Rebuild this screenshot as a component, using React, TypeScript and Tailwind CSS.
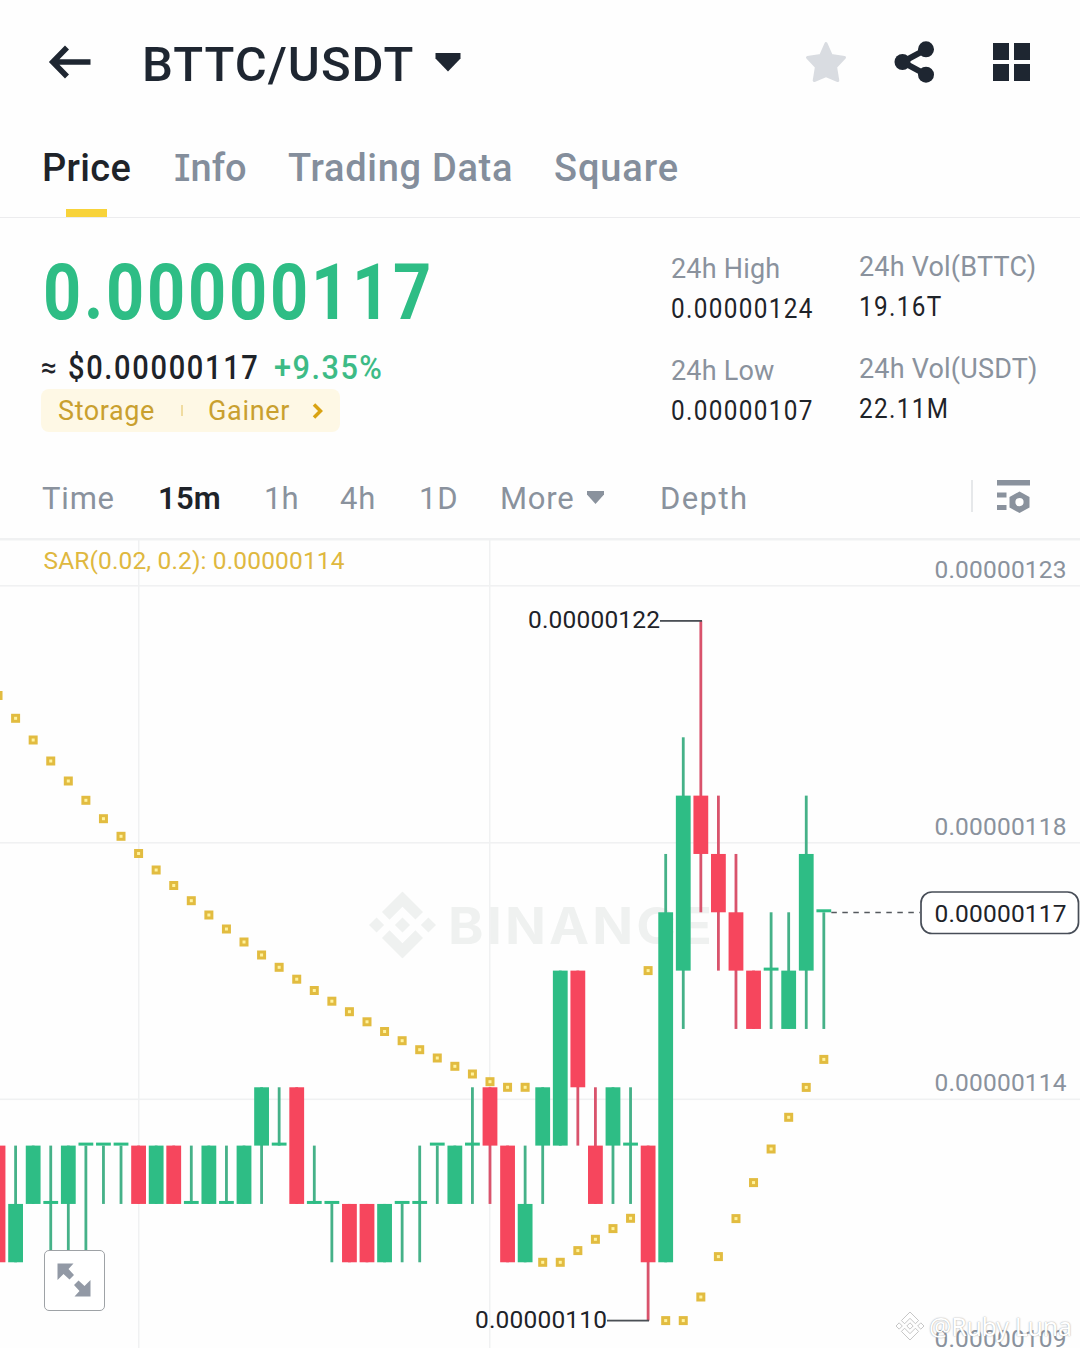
import { SiBinance } from 'react-icons/si';

type Candle = {
  up: boolean;
  top: number;
  bottom: number;
  high: number;
  low: number;
};

// Prices are in units of 0.00000001
const candle = (up: boolean, top: number, bottom: number, high = top, low = bottom): Candle => ({
  up,
  top,
  bottom,
  high,
  low,
});
const green = (top: number, bottom: number, high?: number, low?: number) => candle(true, top, bottom, high, low);
const red = (top: number, bottom: number, high?: number, low?: number) => candle(false, top, bottom, high, low);
const doji = (price: number, high?: number, low?: number) => candle(true, price, price, high, low);

const candles: Candle[] = [
  red(113, 111),
  green(112, 111, 113),
  green(113, 112),
  doji(112, 113, 111),
  green(113, 112, 113, 111),
  doji(113, 113, 111),
  doji(113, 113, 112),
  doji(113, 113, 112),
  red(113, 112),
  green(113, 112),
  red(113, 112),
  doji(112, 113),
  green(113, 112),
  doji(112, 113),
  green(113, 112),
  green(114, 113, 114, 112),
  doji(113, 114),
  red(114, 112),
  doji(112, 113),
  doji(112, 112, 111),
  red(112, 111),
  red(112, 111),
  green(112, 111),
  doji(112, 112, 111),
  doji(112, 113, 111),
  doji(113, 113, 112),
  green(113, 112),
  doji(113, 114, 112),
  red(114, 113, 114, 112),
  red(113, 111),
  green(112, 111, 113),
  green(114, 113, 114, 112),
  green(116, 113),
  red(116, 114, 116, 113),
  red(113, 112, 114),
  green(114, 113, 114, 112),
  doji(113, 114, 112),
  red(113, 111, 113, 110),
  green(117, 111, 118),
  green(119, 116, 120, 115),
  red(119, 118, 122, 117),
  red(118, 117, 119, 116),
  red(117, 116, 118, 115),
  red(116, 115),
  doji(116, 117, 115),
  green(116, 115, 117),
  green(118, 116, 119, 115),
  doji(117, 117, 115),
];

// Parabolic SAR, one point per candle, in chart pixels
const sar = [
  157.5, 180.3, 202, 223, 243, 262.3, 280.7, 298.3, 315.5, 332, 347.5, 362.7, 377, 391, 404, 417, 429.3, 441.2, 452.5,
  463.2, 473.7, 483.8, 493.5, 502.7, 511.7, 520, 528.3, 536, 543.7, 549.3, 549.3, 724.3, 724.3, 712.6, 701.3, 690.6,
  680.3, 432.6, 782.6, 782.6, 759, 718.6, 680.6, 644.6, 611, 579.3, 549.4, 521.4,
];

const axis = [
  { label: '0.00000123', y: 39.5 },
  { label: '0.00000118', y: 296.5 },
  { label: '0.00000114', y: 552.5 },
  { label: '0.00000109', y: 809 },
];

const xOf = (i: number) => 15.6 + (i - 1) * 17.57;
const yOf = (price: number) => 782.6 - (price - 110) * 58.33;

function Header() {
  return (
    <header className="flex h-[124px] items-center pl-[48px] pr-[48px] text-[#1e2631]">
      <svg className="h-9 w-11" viewBox="0 0 44 36" fill="none" stroke="currentColor" strokeWidth="5.6">
        <path d="M42.5 18H5M19 3.5 4.8 18 19 32.5" />
      </svg>
      <h1 className="ml-[50px] w-[293px] whitespace-nowrap pt-[5px] text-[49px] font-medium leading-[60px] tracking-[1px]">
        BTTC/USDT
      </h1>
      <svg className="h-5 w-[26px]" viewBox="0 0 26 20" fill="currentColor">
        <path d="M0.5 1h25v5.5L13 19.5 0.5 6.5z" />
      </svg>
      <svg
        className="ml-auto h-[42px] w-[42px] text-[#d9dce1]"
        viewBox="0 0 42 42"
        fill="currentColor"
        stroke="currentColor"
        strokeWidth="3"
        strokeLinejoin="round"
      >
        <path d="M21 2.5 26.3 14.5 39.5 16.5 30.6 26 32.8 39.5 21 34.5 9.2 39.5 11.4 26 2.5 16.5 15.7 14.5z" />
      </svg>
      <svg className="ml-[47px] h-[42px] w-10" viewBox="0 0 40 42" fill="currentColor">
        <path d="M32 8.3 8.5 21 32 33.7" fill="none" stroke="currentColor" strokeWidth="6" />
        <circle cx="8.5" cy="21" r="8" />
        <circle cx="32" cy="8.3" r="8" />
        <circle cx="32" cy="33.7" r="8" />
      </svg>
      <div className="ml-[59px] mr-[2px] grid grid-cols-2 gap-[4.5px]">
        <span className="size-[16.4px] bg-current" />
        <span className="size-[16.4px] bg-current" />
        <span className="size-[16.4px] bg-current" />
        <span className="size-[16.4px] bg-current" />
      </div>
    </header>
  );
}

function Tabs() {
  return (
    <nav className="flex h-[94px] border-b border-[#ececee] pl-[42px] pt-6 text-[38px] font-medium leading-10 text-[#848e9c]">
      <div className="flex w-[89px] flex-col justify-between text-[#1e2329]">
        <span className="whitespace-nowrap tracking-[0.3px]">Price</span>
        <span className="h-2 w-[41px] self-center bg-[#f8d33a]" />
      </div>
      <span className="ml-[43px] w-[114px] whitespace-nowrap">
        <span className="font-['Inter'] text-[36.5px] [font-feature-settings:'cv08']">I</span>nfo
      </span>
      <span className="w-[266px] whitespace-nowrap tracking-[0.7px]">Trading Data</span>
      <span className="whitespace-nowrap tracking-[0.9px]">Square</span>
    </nav>
  );
}

function Stat({ label, value }: { label: string; value: string }) {
  return (
    <div className="whitespace-nowrap text-[27px] leading-10">
      <div className="tracking-[0.2px] text-[#8a929d]">{label}</div>
      <div className="origin-left scale-x-90 tracking-[1.5px] text-[#1e2329]">{value}</div>
    </div>
  );
}

function Summary() {
  return (
    <section className="flex h-[240px] pl-[41px]">
      <div className="w-[630px] whitespace-nowrap pt-[35px]">
        <div className="ml-[2px] origin-left scale-x-[0.865] text-[77px] font-bold leading-[80px] tracking-[3.2px] text-[#2ebd85]">
          0.00000117
        </div>
        <div className="mt-[15px] flex text-[33px] font-medium leading-10">
          <span className="w-[27px] text-[28px] text-[#1e2329]">≈</span>
          <span className="w-[206px] origin-left scale-x-[0.88] tracking-[1.9px] text-[#1e2329]">$0.00000117</span>
          <span className="origin-left scale-x-[0.93] tracking-[1.6px] text-[#3dbb86]">+9.35%</span>
        </div>
        <div className="mt-px flex h-[43px] w-[299px] items-center rounded-lg bg-[#fef8e5] pl-[17px] text-[27px] text-[#c9a02f]">
          <span className="w-[123px] pt-[2px] tracking-[0.6px]">Storage</span>
          <span className="h-[11px] w-[2px] bg-[#f0dca0]" />
          <span className="ml-[25px] w-[104px] pt-[2px] tracking-[0.7px]">Gainer</span>
          <svg className="h-4 w-3" viewBox="0 0 12 16" fill="none" stroke="#d9a313" strokeWidth="3.5">
            <path d="M2 1.5 8.5 8 2 14.5" />
          </svg>
        </div>
      </div>
      <div className="w-[188px] space-y-[22px] pt-[31px]">
        <Stat label="24h High" value="0.00000124" />
        <Stat label="24h Low" value="0.00000107" />
      </div>
      <div className="space-y-[22px] pt-[29px]">
        <Stat label="24h Vol(BTTC)" value="19.16T" />
        <Stat label="24h Vol(USDT)" value="22.11M" />
      </div>
    </section>
  );
}

function Intervals() {
  return (
    <div className="flex h-20 items-center whitespace-nowrap pl-[42px] pt-[3px] text-[31px] tracking-[0.8px] text-[#8a929d]">
      <span className="w-[116px]">Time</span>
      <span className="w-[106px] font-semibold tracking-[0.2px] text-[#1e2329]">15m</span>
      <span className="w-[76px] tracking-normal">1h</span>
      <span className="w-[79px]">4h</span>
      <span className="w-[81px]">1D</span>
      <span className="flex w-[160px] items-center">
        <span className="w-[87px]">More</span>
        <svg className="mb-[5px] h-[13px] w-[17px]" viewBox="0 0 17 13" fill="currentColor">
          <path d="M0 0h17v3.5L8.5 13 0 3.5z" />
        </svg>
      </span>
      <span className="tracking-[1.4px]">Depth</span>
      <span className="mb-[7px] ml-auto h-8 w-[2px] bg-[#e6e8ea]" />
      <svg className="mb-[6px] ml-6 mr-[50px] h-[33px] w-[33px]" viewBox="0 0 33 33" fill="currentColor">
        <path d="M0 0h33v5.5H0zM0 12.5h9.5v5H0zM0 25h9.5v5H0z" />
        <path
          fillRule="evenodd"
          d="M22.5 11.5 32.5 17v10.5L22.5 33l-10-5.5V17zM22.5 18a4 4 0 1 0 0 8.2 4 4 0 0 0 0-8.2z"
        />
      </svg>
    </div>
  );
}

function Chart() {
  const last = candles.length - 1;

  return (
    <div className="relative">
      <svg className="block h-[810px] w-[1080px]" viewBox="0 0 1080 810" fontSize="24.5">
        {/* Grid */}
        <g fill="#f0f1f2">
          <rect y="0" width="1080" height="2.5" />
          <rect y="47" width="1080" height="1.6" />
          <rect y="304" width="1080" height="1.6" />
          <rect y="560.5" width="1080" height="1.6" />
          <rect x="138" width="1.5" height="810" />
          <rect x="489" width="1.5" height="810" />
        </g>

        <SiBinance x="369" y="353.5" size={67} color="#eff1f0" />
        <text
          x="448"
          y="405.5"
          fill="#eff1f0"
          fontSize="51"
          letterSpacing="3"
          textLength="267"
          lengthAdjust="spacingAndGlyphs"
          className="font-['Inter'] font-bold"
        >
          BINANCE
        </text>

        {candles.map((c, i) => {
          const x = xOf(i);
          const top = yOf(c.top);
          const flat = c.top === c.bottom;
          return (
            <g key={i}>
              <rect
                x={x - 1.4}
                y={yOf(c.high)}
                width="2.8"
                height={yOf(c.low) - yOf(c.high)}
                fill={c.up ? '#45b188' : '#d9536c'}
              />
              <rect
                x={x - 7.4}
                y={flat ? top - 3 : top}
                width="14.8"
                height={flat ? 3 : yOf(c.bottom) - top}
                fill={c.up ? '#2ebd85' : '#f6465d'}
              />
            </g>
          );
        })}

        {sar.map((y, i) => (
          <rect key={i} x={xOf(i) - 3} y={y - 3} width="6" height="6" fill="#fff3a0" stroke="#e2bc40" strokeWidth="3" />
        ))}

        {/* High / low markers */}
        <g fill="#1e2329">
          <text x="528" y="89.5" textLength="132">
            0.00000122
          </text>
          <rect x="660" y="82" width="42" height="1.8" fill="#4a4f55" />
          <text x="475" y="789.5" textLength="132">
            0.00000110
          </text>
          <rect x="607" y="781.7" width="42" height="1.8" fill="#4a4f55" />
        </g>

        <text x="43.5" y="30.5" fill="#dfb83f" textLength="301">
          SAR(0.02, 0.2): 0.00000114
        </text>

        {axis.map((a) => (
          <text key={a.label} x="934.5" y={a.y} fill="#8a929d" textLength="132">
            {a.label}
          </text>
        ))}

        {/* Last price */}
        <path d={`M${xOf(last) + 7.5} 374.5H920`} stroke="#55595e" strokeWidth="1.6" strokeDasharray="5.5 5.5" />
        <rect x="921" y="354" width="157.5" height="41.5" rx="11" fill="#fff" stroke="#474d57" strokeWidth="1.7" />
        <text x="934.5" y="383.5" fill="#1e2329" textLength="132">
          0.00000117
        </text>
      </svg>

      <button className="absolute left-[44px] top-[712px] flex size-[60.5px] items-center justify-center rounded-[5px] border-[1.5px] border-[#9ea2a6] bg-white text-[#9299a5]">
        <svg className="h-[34px] w-[34px]" viewBox="0 0 34 34" fill="currentColor">
          <path d="M0.5 0.5H16.5L11.5 6l5.5 6-4.5 4.5L6.5 11 0.5 17z" />
          <path d="M33.5 33.5H17.5L22.5 28l-5.5-6 4.5-4.5L27.5 23l6-6z" />
        </svg>
      </button>

      {/* Author mark */}
      <div className="absolute bottom-[4px] left-[896px] flex items-center whitespace-nowrap font-['Noto_Sans'] text-[25px] leading-9 tracking-[-0.3px] text-white [text-shadow:0_0_1.5px_#8b8b8b]">
        <SiBinance className="mr-[5px] size-7 fill-white stroke-[#b9b9b9] stroke-[0.7]" />
        @Ruby Luna
      </div>
    </div>
  );
}

export default function App() {
  return (
    <main className="h-[1348px] w-[1080px] overflow-hidden bg-[#fefefe] font-['Roboto',sans-serif]">
      <Header />
      <Tabs />
      <Summary />
      <Intervals />
      <Chart />
    </main>
  );
}
